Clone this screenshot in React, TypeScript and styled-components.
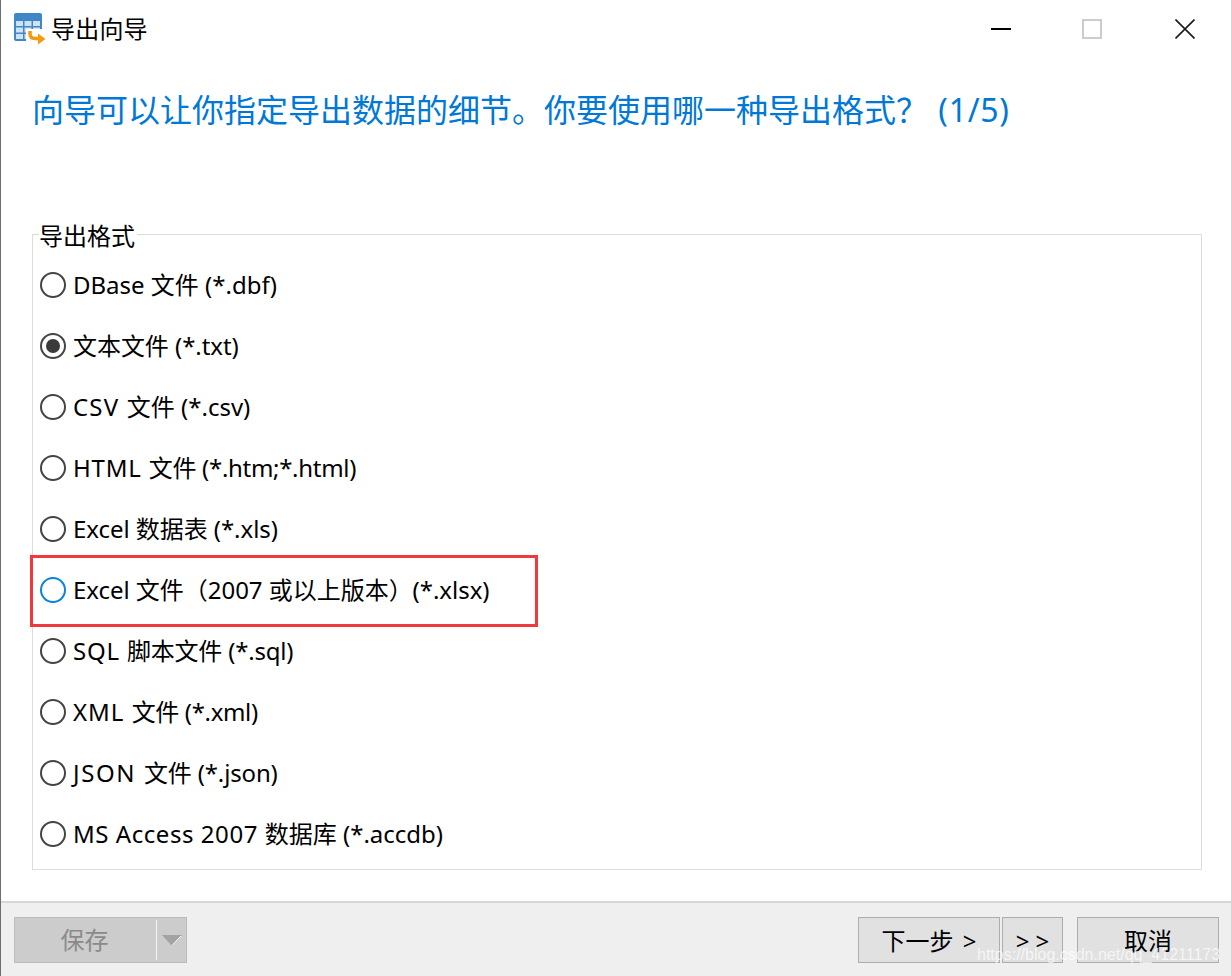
import React from "react";
import styled, { createGlobalStyle } from "styled-components";

const Global = createGlobalStyle`
  html, body { margin: 0; padding: 0; background: #fff; }
  * { box-sizing: border-box; }
`;

const FONT = `"Noto Sans", "Noto Sans CJK SC", sans-serif`;

const Win = styled.div`
  width: 1231px;
  height: 976px;
  display: flex;
  flex-direction: column;
  background: #fff;
  border-left: 1px solid #6e6e6e;
  font-family: ${FONT};
  color: #000;
  overflow: hidden;
  position: relative;
`;

const TitleBar = styled.div`
  height: 58px;
  flex: none;
  display: flex;
  align-items: center;
  padding-left: 13px;
`;

const AppIcon = styled.svg`
  width: 32px;
  height: 33px;
  flex: none;
`;

const TitleText = styled.span`
  margin-left: 5px;
  font-size: 24px;
  line-height: 32px;
  letter-spacing: 0.2px;
  flex: 1;
`;

const WinBtn = styled.div<{ $w: number }>`
  width: ${(p) => p.$w}px;
  height: 58px;
  display: flex;
  align-items: center;
  justify-content: center;
`;

const Heading = styled.h1`
  margin: 0;
  padding: 28px 0 0 31px;
  height: 176px;
  flex: none;
  font-weight: 400;
  font-size: 32px;
  line-height: 48px;
  color: #0078d7;
  white-space: nowrap;
`;

const HeadingStep = styled.span`
  margin-left: 2px;
  letter-spacing: 0.7px;
`;

const Group = styled.div`
  position: relative;
  margin-left: 31px;
  width: 1170px;
  height: 636px;
  flex: none;
  border: 1px solid #dcdcdc;
  padding-top: 20px;
  display: flex;
  flex-direction: column;
`;

const Legend = styled.div`
  position: absolute;
  left: 6px;
  top: -14px;
  padding: 0 2px 0 0;
  background: #fff;
  font-size: 24px;
  line-height: 30px;
  height: 24px;
`;

const Row = styled.div<{ $marked?: boolean }>`
  position: relative;
  height: 61px;
  flex: none;
  display: flex;
  align-items: center;
  padding-left: 7px;
  font-size: 24px;
  white-space: nowrap;
  &::after {
    content: "";
    box-sizing: border-box;
    display: ${(p) => (p.$marked ? "block" : "none")};
    position: absolute;
    left: -3px;
    top: -5px;
    width: 508px;
    height: 72px;
    border: 3px solid #f0393c;
  }
`;

const Radio = styled.span<{ $focus?: boolean; $checked?: boolean }>`
  width: 26px;
  height: 26px;
  flex: none;
  border-radius: 50%;
  border: 2px solid ${(p) => (p.$focus ? "#0a84d8" : "#444")};
  display: flex;
  align-items: center;
  justify-content: center;
  margin-top: -2px;
  &::before {
    content: "";
    display: ${(p) => (p.$checked ? "block" : "none")};
    width: 14px;
    height: 14px;
    border-radius: 50%;
    background: #3a3a3a;
  }
`;

const RowLabel = styled.span`
  margin: -2px 0 0 7px;
  line-height: 32px;
`;

const LabelLead = styled.span<{ $track: number }>`
  letter-spacing: ${(p) => p.$track}px;
`;

const LabelRest = styled.span<{ $track: number }>`
  letter-spacing: ${(p) => p.$track}px;
`;

const Footer = styled.div`
  margin-top: 31px;
  flex: 1;
  border-top: 2px solid #d6d6d6;
  background: #efefef;
  display: flex;
  align-items: flex-start;
  padding: 14px 0 0 13px;
`;

const SaveBtn = styled.div`
  width: 173px;
  height: 46px;
  background: #cccccc;
  border: 1px solid #bcbcbc;
  display: flex;
  color: #8a8a8a;
  font-size: 24px;
`;

const SaveMain = styled.div`
  width: 142px;
  display: flex;
  align-items: center;
  justify-content: center;
  padding-right: 2px;
  line-height: 44px;
  border-right: 1px solid #f4f4f4;
  margin: 2px 0;
`;

const SaveArrow = styled.div`
  flex: 1;
  display: flex;
  align-items: center;
  justify-content: center;
`;

const Spacer = styled.div`
  flex: 1;
`;

const ActionBtn = styled.div<{ $w: number; $gap: number; $word?: number }>`
  width: ${(p) => p.$w}px;
  height: 46px;
  margin-right: ${(p) => p.$gap}px;
  padding-top: 2px;
  background: #e1e1e1;
  border: 1px solid #adadad;
  display: flex;
  align-items: center;
  justify-content: center;
  font-size: 24px;
  line-height: 42px;
  white-space: pre;
  word-spacing: ${(p) => p.$word ?? 0}px;
`;

const Watermark = styled.div`
  position: absolute;
  left: 976px;
  top: 945px;
  font-family: "Liberation Sans", Arial, sans-serif;
  font-size: 16px;
  line-height: 20px;
  color: rgba(255, 255, 255, 0.7);
  white-space: nowrap;
`;

const options = [
  { lead: "DBase ", rest: "文件 (*.dbf)", track: 0, tail: 0 },
  { lead: "", rest: "文本文件 (*.txt)", track: 0, tail: -0.05 },
  { lead: "CSV ", rest: "文件 (*.csv)", track: 1.2, tail: 0 },
  { lead: "HTML ", rest: "文件 (*.htm;*.html)", track: 0.8, tail: -0.3 },
  { lead: "", rest: "Excel 数据表 (*.xls)", track: 0, tail: -0.05 },
  { lead: "", rest: "Excel 文件（2007 或以上版本）(*.xlsx)", track: 0, tail: -0.03 },
  { lead: "SQL ", rest: "脚本文件 (*.sql)", track: 0.8, tail: -0.2 },
  { lead: "XML ", rest: "文件 (*.xml)", track: 1, tail: -0.35 },
  { lead: "JSON ", rest: "文件 (*.json)", track: 1.6, tail: -0.15 },
  { lead: "MS Access 2007 ", rest: "数据库 (*.accdb)", track: 0.55, tail: 0 },
];

export default function App() {
  return (
    <Win>
      <Global />
      <TitleBar>
        <AppIcon viewBox="0 0 32 33">
          <rect x="0" y="0" width="28" height="28" rx="2" fill="#3f88c5" />
          <g fill="#cfe2f2">
            <rect x="2" y="8" width="7" height="5" />
            <rect x="10.5" y="8" width="7" height="5" />
            <rect x="19" y="8" width="7" height="5" />
            <rect x="2" y="14.5" width="7" height="5" />
            <rect x="10.5" y="14.5" width="7" height="5" />
            <rect x="19" y="14.5" width="7" height="5" />
            <rect x="2" y="21" width="7" height="5" />
            <rect x="10.5" y="21" width="7" height="5" />
          </g>
          <path d="M12 16h20v17H12z" fill="#fff" />
          <path d="M16 18v2.5c0 3.2 2 5 5 5h4" fill="none" stroke="#f39c12" strokeWidth="3.6" />
          <path d="M24 20.5L31.5 26L24 31.5z" fill="#f39c12" />
        </AppIcon>
        <TitleText>导出向导</TitleText>
        <WinBtn $w={88}>
          <svg width="20" height="20" viewBox="0 0 20 20">
            <path d="M0 10h20" stroke="#000" strokeWidth="2" />
          </svg>
        </WinBtn>
        <WinBtn $w={94}>
          <svg width="20" height="20" viewBox="0 0 20 20">
            <rect x="1" y="1" width="18" height="18" fill="none" stroke="#cccccc" strokeWidth="2" />
          </svg>
        </WinBtn>
        <WinBtn $w={92}>
          <svg width="20" height="20" viewBox="0 0 20 20">
            <path d="M0.5 0.5L19.5 19.5M19.5 0.5L0.5 19.5" stroke="#1a1a1a" strokeWidth="1.6" />
          </svg>
        </WinBtn>
      </TitleBar>
      <Heading>
        向导可以让你指定导出数据的细节。你要使用哪一种导出格式？ <HeadingStep>(1/5)</HeadingStep>
      </Heading>
      <Group>
        <Legend>导出格式</Legend>
        {options.map((o, i) => (
          <Row key={o.rest} $marked={i === 5}>
            <Radio $checked={i === 1} $focus={i === 5} />
            <RowLabel>
              <LabelLead $track={o.track}>{o.lead}</LabelLead>
              <LabelRest $track={o.tail}>{o.rest}</LabelRest>
            </RowLabel>
          </Row>
        ))}
      </Group>
      <Footer>
        <SaveBtn>
          <SaveMain>保存</SaveMain>
          <SaveArrow>
            <svg width="20" height="11" viewBox="0 0 20 11">
              <path d="M0 0h20L10 11z" fill="#a3a3a3" />
              <path d="M19 1L10 10.5" stroke="#fff" strokeWidth="1" />
            </svg>
          </SaveArrow>
        </SaveBtn>
        <Spacer />
        <ActionBtn $w={142} $gap={2} $word={3}>下一步 &gt;</ActionBtn>
        <ActionBtn $w={61} $gap={14}>&gt; &gt;</ActionBtn>
        <ActionBtn $w={142} $gap={12}>取消</ActionBtn>
      </Footer>
      <Watermark>https://blog.csdn.net/qq_41211173</Watermark>
    </Win>
  );
}
